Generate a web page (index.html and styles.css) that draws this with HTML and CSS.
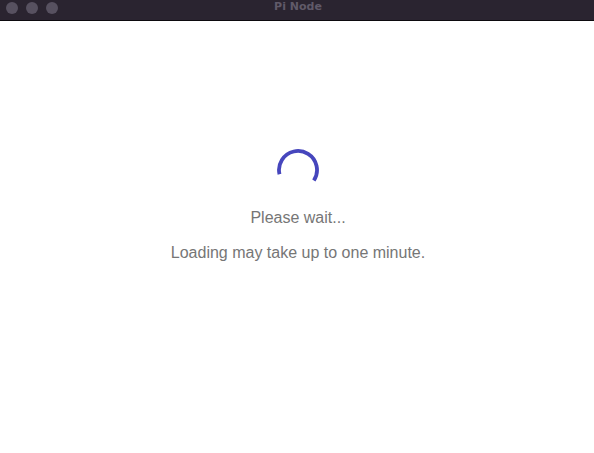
FILE: index.html
```html
<!DOCTYPE html>
<html>
<head>
<meta charset="utf-8">
<title>Pi Node</title>
<link rel="stylesheet" href="styles.css">
</head>
<body>
<div class="titlebar">
  <div class="lights">
    <span class="light"></span>
    <span class="light"></span>
    <span class="light"></span>
  </div>
  <div class="title">Pi Node</div>
  <div></div>
</div>
<main class="content">
  <svg class="spinner" width="44" height="44" viewBox="0 0 44 44">
    <circle cx="22" cy="22" r="19" fill="none" stroke="#4646bd" stroke-width="3.8" stroke-dasharray="74.6 119.4" transform="rotate(167 22 22)"/>
  </svg>
  <p class="msg">Please wait...</p>
  <p class="msg second">Loading may take up to one minute.</p>
</main>
</body>
</html>
```
FILE: styles.css
```css
html, body {
  margin: 0;
  padding: 0;
  background: #ffffff;
}
.titlebar {
  height: 20px;
  background: #2a2430;
  border-bottom: 1px solid #0c0a0e;
  display: grid;
  grid-template-columns: 1fr auto 1fr;
}
.lights {
  display: flex;
  gap: 8px;
  padding: 2px 0 0 6px;
}
.light {
  width: 12px;
  height: 12px;
  border-radius: 50%;
  background: #575160;
}
.title {
  font-family: "DejaVu Sans", sans-serif;
  font-weight: bold;
  font-size: 11px;
  line-height: 13px;
  color: #605a69;
  padding-left: 2px;
}
.content {
  display: flex;
  flex-direction: column;
  align-items: center;
  padding: 127px 0 0 2px;
}
.spinner {
  display: block;
  margin-bottom: 17px;
}
.msg {
  margin: 0;
  font-family: "Liberation Sans", Arial, sans-serif;
  font-size: 16px;
  line-height: 18px;
  color: #767676;
}
.second {
  margin-top: 17px;
}
```
